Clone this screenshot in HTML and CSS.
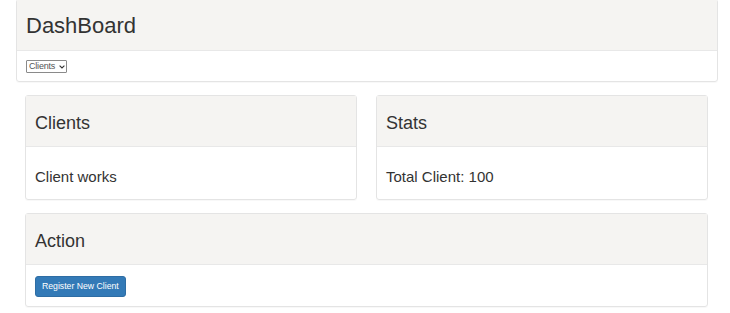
FILE: index.html
```html
<!DOCTYPE html>
<html lang="en">
<head>
  <meta charset="UTF-8" />
  <title>DashBoard</title>
  <link rel="stylesheet" href="styles.css">
</head>
<body>

<div class="top-panel">
  <div class="top-heading">
    <h1>DashBoard</h1>
  </div>
  <div class="top-body">
    <span class="select-wrap">
      <select id="menu">
        <option>Clients</option>
        <option>Stats</option>
      </select>
      <svg class="chevron" width="6" height="4" viewBox="0 0 6 4">
        <path d="M0.6 0.6 L3 3 L5.4 0.6" fill="none" stroke="#333" stroke-width="1.1"/>
      </svg>
    </span>
  </div>
</div>

<div class="content">
  <div class="row">
    <div class="card">
      <div class="card-heading"><h3>Clients</h3></div>
      <div class="card-body"><p>Client works</p></div>
    </div>
    <div class="card">
      <div class="card-heading"><h3>Stats</h3></div>
      <div class="card-body"><p>Total Client: <span id="total">100</span></p></div>
    </div>
  </div>

  <div class="card action">
    <div class="card-heading"><h3>Action</h3></div>
    <div class="action-body">
      <button class="btn-primary">Register New Client</button>
    </div>
  </div>
</div>

<div class="footer-line"></div>

</body>
</html>
```

FILE: styles.css
```css
body {
  margin: 0;
  padding: 0;
  font-family: "Liberation Sans", Arial, sans-serif;
  color: #333;
  background: #fff;
  overflow: hidden;
}

.top-panel {
  margin: -1px 12px 0 16px;
  border: 1px solid #e4e4e4;
  border-radius: 3px;
  box-shadow: 0 1px 1px rgba(0, 0, 0, 0.03);
}

.top-heading {
  background: #f5f4f2;
  border-bottom: 1px solid #e8e8e8;
  padding: 13px 9px 12px;
}

.top-heading h1 {
  margin: 0;
  font-size: 22px;
  line-height: 25px;
  font-weight: normal;
}

.top-body {
  display: flex;
  align-items: flex-start;
  padding: 9px 9px 8px;
  height: 13px;
}

.select-wrap {
  position: relative;
  display: block;
  height: 13px;
}

#menu {
  appearance: none;
  -webkit-appearance: none;
  display: block;
  width: 41px;
  height: 13px;
  margin: 0;
  padding: 0 0 0 2px;
  font-family: "Liberation Sans", Arial, sans-serif;
  font-size: 9px;
  letter-spacing: -0.2px;
  line-height: 11px;
  color: #555;
  border: 1px solid #8a8a8a;
  border-radius: 1px;
  background: #fff;
}

.chevron {
  position: absolute;
  left: 33px;
  top: 5px;
  pointer-events: none;
}

.content {
  padding: 13px 22px 0 25px;
}

.row {
  display: grid;
  grid-template-columns: 1fr 1fr;
  gap: 19px;
}

.card {
  border: 1px solid #e4e4e4;
  border-radius: 3px;
  box-shadow: 0 1px 1px rgba(0, 0, 0, 0.03);
}

.card-heading {
  background: #f5f4f2;
  border-bottom: 1px solid #e8e8e8;
  padding: 17px 9px 12px;
}

.card-heading h3 {
  margin: 0;
  font-size: 18px;
  line-height: 21px;
  font-weight: normal;
}

.card-body {
  padding: 21px 9px 13px;
}

.card-body p {
  margin: 0;
  font-size: 15px;
  line-height: 18px;
}

.action {
  margin-top: 13px;
}

.action-body {
  padding: 10px 9px 9px;
}

.btn-primary {
  font-family: "Liberation Sans", Arial, sans-serif;
  font-size: 8.7px;
  line-height: 13px;
  height: 21px;
  padding: 0 6px;
  color: #fff;
  background: #337ab7;
  border: 1px solid #2e6da4;
  border-radius: 3px;
  cursor: pointer;
}

.footer-line {
  margin-top: 6px;
  border-top: 1px solid #e6e6e6;
}
```
